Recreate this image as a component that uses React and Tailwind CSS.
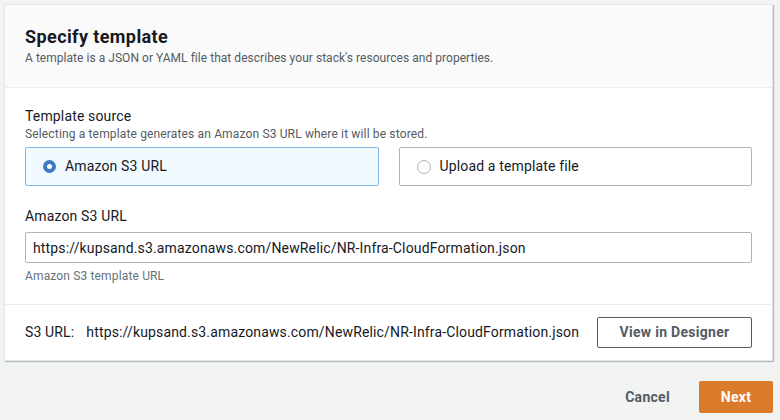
import { useState } from "react";

const URL = "https://kupsand.s3.amazonaws.com/NewRelic/NR-Infra-CloudFormation.json";

const RadioTile = ({ label, checked, onClick }) => (
    <button
        onClick={onClick}
        className={`flex-1 h-[39px] flex items-center pl-[17px] rounded-[2px] border text-left ${
            checked ? "bg-[#f1faff] border-[#82b7e3]" : "bg-white border-[#aab7b8]"
        }`}
    >
        {checked ? (
            <span className="w-[13px] h-[13px] rounded-full bg-[#3d78c1] flex items-center justify-center">
                <span className="w-[5px] h-[5px] rounded-full bg-white" />
            </span>
        ) : (
            <span className="w-[14px] h-[14px] rounded-full border border-[#aab7b8] bg-white" />
        )}
        <span className="ml-[9px] text-[14px] text-[#16191f]">{label}</span>
    </button>
);

export default function App() {
    const [source, setSource] = useState("s3");

    return (
        <div className="min-h-screen w-[780px] h-[420px] bg-[#f2f3f3] px-1 pt-1 font-['Roboto',sans-serif] tracking-[0.15px] text-[#16191f] overflow-hidden">
            {/* Tarjeta principal */}
            <div className="w-[769px] bg-white border border-[#e3e6e6] shadow-[1px_1px_1px_rgba(0,28,36,0.25)]">
                <div className="bg-[#fafafa] border-b border-[#eaeded] px-5 pt-[21px] pb-[21px]">
                    <h2 className="text-[18px] leading-[22px] font-bold tracking-[0.4px]">Specify template</h2>
                    <p className="mt-[2px] text-[12px] leading-[16px] tracking-[0.04px] text-[#545b64]">
                        A template is a JSON or YAML file that describes your stack's resources and properties.
                    </p>
                </div>

                <div className="px-5 pt-[18px] pb-5 border-b border-[#eaeded]">
                    <div className="text-[14px] leading-[20px]">Template source</div>
                    <div className="text-[12px] leading-[16px] text-[#545b64]">
                        Selecting a template generates an Amazon S3 URL where it will be stored.
                    </div>
                    <div className="mt-[5px] flex gap-5">
                        <RadioTile label="Amazon S3 URL" checked={source === "s3"} onClick={() => setSource("s3")} />
                        <RadioTile label="Upload a template file" checked={source === "upload"} onClick={() => setSource("upload")} />
                    </div>

                    <div className="mt-5 text-[14px] leading-[20px]">Amazon S3 URL</div>
                    <input
                        defaultValue={URL}
                        className="mt-[6px] w-full h-[31px] px-[7px] text-[14px] tracking-[0.15px] text-[#16191f] border border-[#aab7b8] rounded-[2px] outline-none"
                    />
                    <div className="mt-[5px] text-[12px] leading-[16px] text-[#687078]">Amazon S3 template URL</div>
                </div>

                <div className="px-5 pt-3 pb-3 flex items-center">
                    <span className="text-[14px]">S3 URL:</span>
                    <span className="ml-3 text-[14px]">{URL}</span>
                    <button className="ml-auto w-[155px] h-[31px] border border-[#545b64] rounded-[2px] text-[14px] font-bold tracking-[0.3px] text-[#545b64] bg-white">
                        View in Designer
                    </button>
                </div>
            </div>

            {/* Acciones */}
            <div className="w-[769px] mt-5 flex justify-end items-center">
                <button className="text-[14px] font-bold tracking-[0.3px] text-[#545b64]">Cancel</button>
                <button className="ml-[29px] w-[74px] h-[32px] rounded-[2px] bg-[#dc7a2c] text-white text-[14px] font-bold tracking-[0.3px]">
                    Next
                </button>
            </div>
        </div>
    );
}
